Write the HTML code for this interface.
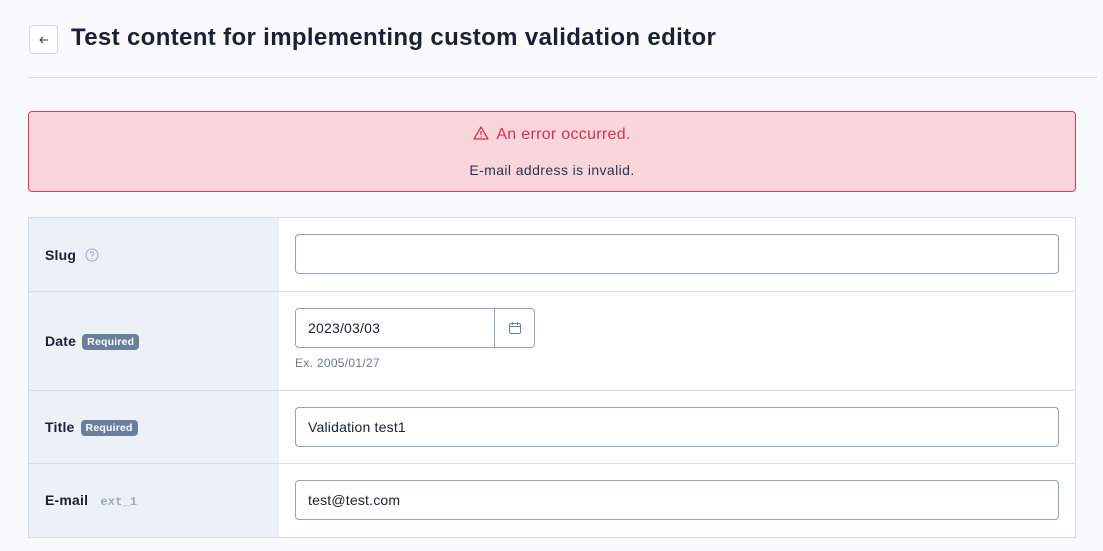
<!DOCTYPE html>
<html><head><style>
*{box-sizing:border-box;margin:0;padding:0}
body{width:1103px;height:551px;background:#f8fafc;font-family:"Liberation Sans",sans-serif;color:#1a2035;position:relative;overflow:hidden}
.abs{position:absolute}
.back{left:29px;top:25px;width:29px;height:29px;border:1px solid #cfd9e6;border-radius:4px;background:#fff;display:flex;align-items:center;justify-content:center}
.hr{left:28px;top:77px;width:1069px;height:1px;background:#d3deea}
.err{left:28px;top:111px;width:1048px;height:81px;background:#f9d6dc;border:1px solid #e23a58;border-radius:4px}
.et{width:100%;text-align:center;position:absolute;top:14px;color:#d6304c;font-size:16px;letter-spacing:0.3px}
.em{width:100%;text-align:center;position:absolute;top:50px;color:#283552;font-size:14px;letter-spacing:0.4px}
.tbl{left:28px;top:217px;width:1048px;height:321px;border:1px solid #d3deea;background:#fff}
.lab{position:absolute;left:0;width:250px;background:#ecf1f8}
.row{position:absolute;left:0;width:1046px;border-bottom:1px solid #d3deea}
.l{position:absolute;left:16px;font-weight:bold;font-size:14px;color:#1a2035;letter-spacing:0.2px}
.badge{display:inline-block;background:#6b7f9c;color:#fff;font-size:10.5px;padding:2px 5px;border-radius:4px;margin-left:6px;vertical-align:1px;letter-spacing:0.2px}
.inp{position:absolute;left:266px;border:1px solid #8fa3bf;border-radius:4px;height:40px;font-size:14px;padding:11px 12px;background:#fff;color:#1a2035;letter-spacing:0.2px}
</style></head><body>
<div class="abs back"><svg width="12" height="12" viewBox="0 0 12 12"><path d="M10 6H2M5 3L2 6l3 3" stroke="#333" fill="none" stroke-width="1"/></svg></div>
<div class="abs" style="left:71px;top:24px;font-size:24px;font-weight:bold;color:#1a2035;letter-spacing:0.35px">Test content for implementing custom validation editor</div>
<div class="abs hr"></div>
<div class="abs err">
<div class="et"><svg width="16" height="14" viewBox="0 0 16 14" style="vertical-align:-1px;margin-right:7px"><path d="M8 1L15 13H1Z" fill="none" stroke="#d6304c" stroke-width="1.3" stroke-linejoin="round"/><path d="M8 5v4M8 10.5v1" stroke="#d6304c" stroke-width="1.3"/></svg>An error occurred.</div>
<div class="em">E-mail address is invalid.</div>
</div>
<div class="abs tbl">
<div class="lab" style="top:0;height:319px"></div>
<div class="row" style="top:0;height:74px"><div class="l" style="top:29px">Slug <svg width="14" height="14" viewBox="0 0 14 14" style="vertical-align:-2px;margin-left:5px"><circle cx="7" cy="7" r="6" fill="none" stroke="#9aaac0"/><path d="M5.3 5.5a1.7 1.7 0 1 1 2.2 1.6c-.4.2-.5.5-.5 1v.4M7 10v.6" stroke="#9aaac0" fill="none"/></svg></div><div class="inp" style="top:16px;width:764px"></div></div>
<div class="row" style="top:74px;height:99px"><div class="l" style="top:41px">Date<span class="badge">Required</span></div>
<div class="inp" style="top:16px;width:200px;border-radius:4px 0 0 4px">2023/03/03</div>
<div class="inp" style="top:16px;left:465px;width:41px;border-radius:0 4px 4px 0;padding:0;display:flex;align-items:center;justify-content:center"><svg width="14" height="14" viewBox="0 0 14 14"><rect x="1.5" y="2.5" width="11" height="10" rx="1.5" fill="none" stroke="#6b7f9c"/><path d="M1.5 5.5h11M4.5 1v3M9.5 1v3" stroke="#6b7f9c"/></svg></div>
<div style="position:absolute;left:266px;top:64px;font-size:12px;color:#6b7890;letter-spacing:0.3px">Ex. 2005/01/27</div></div>
<div class="row" style="top:173px;height:73px"><div class="l" style="top:28px">Title<span class="badge">Required</span></div><div class="inp" style="top:16px;width:764px">Validation test1</div></div>
<div class="row" style="top:246px;height:73px;border:0"><div class="l" style="top:28px">E-mail <span style="font-family:'Liberation Mono',monospace;font-size:12px;color:#9aaac0;margin-left:8px;font-weight:bold">ext_1</span></div><div class="inp" style="top:16px;width:764px">test@test.com</div></div>
</div>
</body></html>
